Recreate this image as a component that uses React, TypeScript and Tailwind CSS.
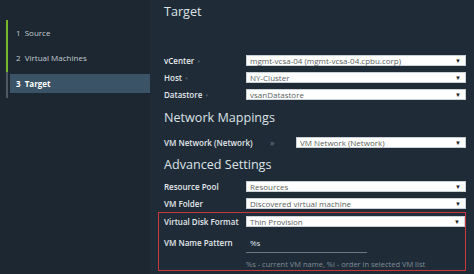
const font = { fontFamily: '"Open Sans", "Liberation Sans", sans-serif' };

function Select({ value }: { value: string }) {
  return (
    <div className="flex h-[11px] flex-1 items-center justify-between border border-[#c9d1d6] bg-white pl-[3px] pr-[4px] text-[8px] leading-none text-[#5c5f61]">
      <span>{value}</span>
      <span className="text-[6px] text-[#222]">▼</span>
    </div>
  );
}

function Row({ label, value, mark }: { label: string; value: string; mark?: boolean }) {
  return (
    <div className="flex h-[11px] items-center">
      <div className="w-[82px] text-[8px] font-semibold text-[#e4e8eb]">
        {label}
        {mark && <span className="ml-[3px] text-[6px] text-[#4f5f6c]">*</span>}
      </div>
      <Select value={value} />
    </div>
  );
}

function Heading({ children }: { children: string }) {
  return <h2 className="h-[13px] text-[12.6px] font-normal leading-none text-[#dde2e6]">{children}</h2>;
}

export default function App() {
  return (
    <div className="flex h-[274px] w-[474px] overflow-hidden bg-[#1f2c38]" style={font}>
      {/* sidebar */}
      <aside className="flex w-[150px] shrink-0 bg-[#1c2731] pt-[20px]">
        <div className="ml-[6px] flex w-[2px] flex-col">
          <div className="h-[52px] bg-[#76b82a]" />
          <div className="h-[26px] bg-[#4d5a65]" />
        </div>
        <div className="ml-[2px] flex flex-1 flex-col">
          <div className="flex h-[25px] items-center pl-[6px] text-[8px] text-[#c4ccd2]">
            1&nbsp;&nbsp;Source
          </div>
          <div className="flex h-[25px] items-center pl-[6px] text-[8px] text-[#c4ccd2]">
            2&nbsp;&nbsp;Virtual Machines
          </div>
          <div className="mt-[4px] flex h-[19px] items-center bg-[#3a5367] pl-[6px] text-[8px] font-bold text-white">
            3&nbsp;&nbsp;Target
          </div>
        </div>
      </aside>

      {/* main */}
      <main className="flex flex-1 flex-col pl-[14px] pr-[8px] pt-[6px]">
        <Heading>Target</Heading>
        <div className="mt-[36px] flex flex-col gap-[6px]">
          <Row label="vCenter" value="mgmt-vcsa-04 (mgmt-vcsa-04.cpbu.corp)" mark />
          <Row label="Host" value="NY-Cluster" mark />
          <Row label="Datastore" value="vsanDatastore" mark />
        </div>

        <div className="mt-[12px]">
          <Heading>Network Mappings</Heading>
        </div>
        <div className="mt-[12px] flex h-[11px] items-center">
          <div className="w-[106px] text-[8px] font-semibold text-[#e4e8eb]">VM Network (Network)</div>
          <div className="w-[26px] text-[9px] leading-none text-[#6f7f8c]">»</div>
          <Select value="VM Network (Network)" />
        </div>

        <div className="mt-[11px]">
          <Heading>Advanced Settings</Heading>
        </div>
        <div className="mt-[9px] flex flex-col gap-[6px]">
          <Row label="Resource Pool" value="Resources" />
          <Row label="VM Folder" value="Discovered virtual machine" />
        </div>

        <div className="-ml-[6px] mt-[3px] h-[59px] border-[1.5px] border-[#c8383a] pl-[5px] pt-[3px]">
          <Row label="Virtual Disk Format" value="Thin Provision" />
          <div className="mt-[6px] flex items-center">
            <div className="w-[82px] text-[8px] font-semibold text-[#e4e8eb]">VM Name Pattern</div>
            <div className="w-[121px] border-b border-[#6c7884] pb-[3px] pl-[4px] pt-[4px] text-[8px] text-[#dfe3e6]">
              %s
            </div>
          </div>
          <div className="ml-[82px] mt-[6px] text-[7.5px] text-[#7f8c97]">
            %s - current VM name, %i - order in selected VM list
          </div>
        </div>
      </main>
    </div>
  );
}
